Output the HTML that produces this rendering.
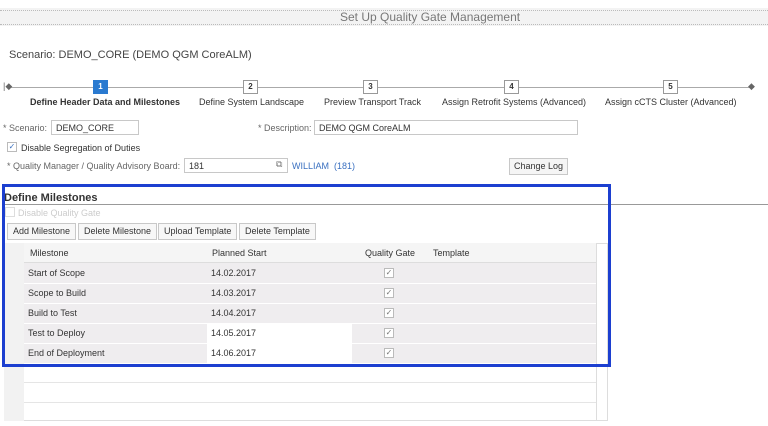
<!DOCTYPE html>
<html><head><style>
*{margin:0;padding:0;box-sizing:border-box}
body{width:768px;height:426px;background:#fff;font-family:"Liberation Sans",sans-serif;font-size:9px;color:#333;position:relative;overflow:hidden}
.a{position:absolute;white-space:nowrap}
.box{position:absolute;border:1px solid #c8c8c8;background:#fff}
.step{position:absolute;top:80px;width:15px;height:14px;border:1px solid #999;background:#fff;font-size:8px;font-weight:bold;text-align:center;line-height:12px}
.lbl{color:#666}
.btn{position:absolute;top:223px;height:17px;border:1px solid #c8c8c8;background:#f7f7f7;font-size:9px;line-height:15px;padding:0 5px;color:#333}
.cb{position:absolute;width:10px;height:10px;border:1px solid #bbb;background:#fff;font-size:8px;line-height:8px;text-align:center;color:#777}
</style></head><body>
<div class="a" style="left:0;top:8px;width:768px;height:18px;background:#f3f3f3"></div>
<div class="a" style="left:0;top:10px;width:768px;border-top:1px dotted #bbb"></div>
<div class="a" style="left:0;top:24px;width:768px;border-top:1px dotted #bbb"></div>
<div class="a" style="left:340px;top:10px;font-size:12px;color:#777">Set Up Quality Gate Management</div>
<div class="a" style="left:9px;top:49px;font-size:11px;color:#444">Scenario: DEMO_CORE (DEMO QGM CoreALM)</div>
<div class="a" style="left:10px;top:87px;width:744px;border-top:1px solid #aaa"></div>
<div class="a" style="left:3px;top:81px;font-size:9px;color:#666">|◆</div>
<div class="a" style="left:748px;top:81px;font-size:9px;color:#666">◆</div>
<div class="step" style="left:93px;background:#2a7ad0;border-color:#2a7ad0;color:#fff">1</div>
<div class="step" style="left:243px">2</div>
<div class="step" style="left:363px">3</div>
<div class="step" style="left:504px">4</div>
<div class="step" style="left:663px">5</div>
<div class="a" style="left:30px;top:97px;font-weight:bold;color:#333">Define Header Data and Milestones</div>
<div class="a" style="left:199px;top:97px">Define System Landscape</div>
<div class="a" style="left:324px;top:97px">Preview Transport Track</div>
<div class="a" style="left:442px;top:97px">Assign Retrofit Systems (Advanced)</div>
<div class="a" style="left:605px;top:97px">Assign cCTS Cluster (Advanced)</div>
<div class="a lbl" style="left:3px;top:123px">* Scenario:</div>
<div class="box" style="left:51px;top:120px;width:88px;height:15px"></div>
<div class="a" style="left:56px;top:123px">DEMO_CORE</div>
<div class="a lbl" style="left:258px;top:123px">* Description:</div>
<div class="box" style="left:314px;top:120px;width:264px;height:15px"></div>
<div class="a" style="left:319px;top:123px">DEMO QGM CoreALM</div>
<div class="cb" style="left:7px;top:142px;color:#3a70c0">✓</div>
<div class="a" style="left:21px;top:143px">Disable Segregation of Duties</div>
<div class="a lbl" style="left:7px;top:161px">* Quality Manager / Quality Advisory Board:</div>
<div class="box" style="left:184px;top:158px;width:104px;height:15px"></div>
<div class="a" style="left:189px;top:161px">181</div>
<div class="a" style="left:276px;top:159px;color:#777;font-size:9px">⧉</div>
<div class="a" style="left:292px;top:161px;color:#3a70c0">WILLIAM&nbsp; (181)</div>
<div class="box" style="left:509px;top:158px;width:59px;height:17px;background:#f5f5f5;text-align:center;line-height:15px">Change Log</div>
<div class="a" style="left:4px;top:192px;font-size:11px;font-weight:bold;color:#333">Define Milestones</div>
<div class="a" style="left:3px;top:204px;width:765px;border-top:1px solid #999"></div>
<div class="cb" style="left:5px;top:207px;border-color:#ddd"></div>
<div class="a" style="left:18px;top:208px;color:#ccc">Disable Quality Gate</div>
<div class="btn" style="left:7px">Add Milestone</div>
<div class="btn" style="left:78px">Delete Milestone</div>
<div class="btn" style="left:158px">Upload Template</div>
<div class="btn" style="left:239px">Delete Template</div>
<div class="a" style="left:4px;top:243px;width:604px;height:178px;border:1px solid #ddd;background:#fff"></div>
<div class="a" style="left:4px;top:243px;width:20px;height:178px;background:#f2f2f2"></div>
<div class="a" style="left:24px;top:243px;width:572px;height:20px;background:#f5f5f5;border-bottom:1px solid #ddd"></div>
<div class="a" style="left:30px;top:248px">Milestone</div>
<div class="a" style="left:212px;top:248px">Planned Start</div>
<div class="a" style="left:365px;top:248px">Quality Gate</div>
<div class="a" style="left:433px;top:248px">Template</div>
<div class="a" style="left:24px;top:263px;width:572px;height:100px;background:#efedef"></div>
<div class="a" style="left:207px;top:323px;width:145px;height:40px;background:#fff"></div>
<div class="a" style="left:24px;top:283px;width:572px;border-top:1px solid #fff"></div>
<div class="a" style="left:24px;top:303px;width:572px;border-top:1px solid #fff"></div>
<div class="a" style="left:24px;top:323px;width:572px;border-top:1px solid #fff"></div>
<div class="a" style="left:24px;top:343px;width:572px;border-top:1px solid #fff"></div>
<div class="a" style="left:24px;top:382px;width:572px;border-top:1px solid #e5e5e5"></div>
<div class="a" style="left:24px;top:402px;width:572px;border-top:1px solid #e5e5e5"></div>
<div class="a" style="left:596px;top:243px;width:1px;height:178px;background:#ddd"></div>
<div class="a" style="left:28px;top:268px">Start of Scope</div><div class="a" style="left:211px;top:268px">14.02.2017</div>
<div class="a" style="left:28px;top:288px">Scope to Build</div><div class="a" style="left:211px;top:288px">14.03.2017</div>
<div class="a" style="left:28px;top:308px">Build to Test</div><div class="a" style="left:211px;top:308px">14.04.2017</div>
<div class="a" style="left:28px;top:328px">Test to Deploy</div><div class="a" style="left:211px;top:328px">14.05.2017</div>
<div class="a" style="left:28px;top:348px">End of Deployment</div><div class="a" style="left:211px;top:348px">14.06.2017</div>
<div class="cb" style="left:384px;top:268px">✓</div>
<div class="cb" style="left:384px;top:288px">✓</div>
<div class="cb" style="left:384px;top:308px">✓</div>
<div class="cb" style="left:384px;top:328px">✓</div>
<div class="cb" style="left:384px;top:348px">✓</div>
<div class="a" style="left:2px;top:184px;width:609px;height:183px;border:3px solid #1c3fd0"></div>
</body></html>
